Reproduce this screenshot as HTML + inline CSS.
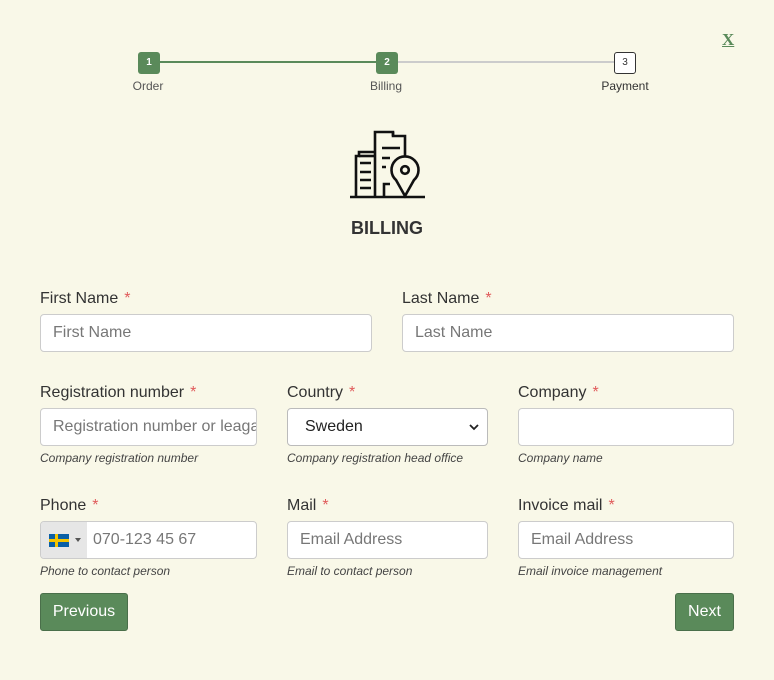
<!DOCTYPE html>
<html><head><meta charset="utf-8"><style>
*{box-sizing:border-box;margin:0;padding:0}
body{width:774px;height:680px;background:#f9f8e8;font-family:"Liberation Sans",sans-serif;position:relative;overflow:hidden;color:#333}
.abs{position:absolute}
.step{position:absolute;width:22px;height:22px;border-radius:3px;font-size:10px;font-weight:bold;text-align:center;line-height:22px}
.g{background:#5a8a5a;color:#fff}
.w{background:#fff;border:1px solid #333;color:#333;line-height:20px;font-weight:normal}
.sl{position:absolute;font-size:12px;color:#555;text-align:center;width:80px}
label{position:absolute;font-size:16px;color:#333}
label i{font-style:normal;color:#e05a5a;margin-left:6px}
.in{position:absolute;height:38px;background:#fff;border:1px solid #ccc;border-radius:4px;font-size:16px;color:#777;padding:0 12px;line-height:36px;white-space:nowrap;overflow:hidden}
.h{position:absolute;font-size:12px;font-style:italic;color:#444}
.btn{position:absolute;background:#5a8a5a;color:#fff;border:1px solid #4a6f4a;border-radius:3px;font-size:16px;text-align:center;line-height:36px;height:38px}
</style></head><body>
<div class="abs" style="left:722px;top:30px;font-family:'Liberation Serif',serif;font-weight:bold;font-size:17px;color:#5a8a5a;text-decoration:underline">X</div>
<div class="abs" style="left:148px;top:61px;width:240px;height:2px;background:#5a8a5a"></div>
<div class="abs" style="left:388px;top:61px;width:236px;height:2px;background:#ccc"></div>
<div class="step g" style="left:138px;top:52px">1</div>
<div class="step g" style="left:376px;top:52px">2</div>
<div class="step w" style="left:614px;top:52px">3</div>
<div class="sl" style="left:108px;top:79px">Order</div>
<div class="sl" style="left:346px;top:79px">Billing</div>
<div class="sl" style="left:585px;top:79px;color:#333">Payment</div>
<svg class="abs" style="left:349px;top:130px" width="77" height="70" viewBox="0 0 77 70" fill="none" stroke="#111" stroke-width="2.6">
<path d="M1 67H76"/>
<path d="M7 67V26H10V22H26"/><path d="M10 26H26"/>
<path d="M26 67V2H44V6H56V27"/><path d="M44 2V6"/>
<path d="M11 33H22M11 42H22M11 50H22M11 58H22"/>
<path d="M33 18H51M33 28H41M33 37H37"/>
<path d="M35 67V54H41"/>
<path d="M56 66L47 50A13.5 13.5 0 1 1 65 50Z" fill="#f9f8e8"/>
<circle cx="56" cy="40" r="3.8"/>
</svg>
<div class="abs" style="left:0;width:774px;top:218px;text-align:center;font-size:18px;font-weight:bold;color:#333">BILLING</div>

<label style="left:40px;top:290px">First Name<i>*</i></label>
<div class="in" style="left:40px;top:314px;width:332px">First Name</div>
<label style="left:402px;top:290px">Last Name<i>*</i></label>
<div class="in" style="left:402px;top:314px;width:332px">Last Name</div>

<label style="left:40px;top:384px">Registration number<i>*</i></label>
<div class="in" style="left:40px;top:408px;width:217px">Registration number or leagal</div>
<div class="h" style="left:40px;top:451px">Company registration number</div>
<label style="left:287px;top:384px">Country<i>*</i></label>
<div class="in" style="left:287px;top:408px;width:201px;color:#222;border-color:#bbb;padding-left:17px">Sweden<svg style="position:absolute;right:8px;top:14px" width="10" height="8"><path d="M1 2L5 6L9 2" stroke="#222" stroke-width="1.8" fill="none"/></svg></div>
<div class="h" style="left:287px;top:451px">Company registration head office</div>
<label style="left:518px;top:384px">Company<i>*</i></label>
<div class="in" style="left:518px;top:408px;width:216px"></div>
<div class="h" style="left:518px;top:451px">Company name</div>

<label style="left:40px;top:497px">Phone<i>*</i></label>
<div class="in" style="left:40px;top:521px;width:217px;padding-left:52px">070-123 45 67</div>
<div class="abs" style="left:41px;top:522px;width:46px;height:36px;background:#e6e6e6;border-radius:3px 0 0 3px"></div>
<svg class="abs" style="left:49px;top:534px" width="20" height="13"><rect width="20" height="13" fill="#0a5fa6"/><rect x="6" width="3" height="13" fill="#f5c400"/><rect y="5" width="20" height="3" fill="#f5c400"/></svg>
<div class="abs" style="left:75px;top:538px;border:3px solid transparent;border-top:4px solid #555"></div>
<div class="h" style="left:40px;top:564px">Phone to contact person</div>
<label style="left:287px;top:497px">Mail<i>*</i></label>
<div class="in" style="left:287px;top:521px;width:201px">Email Address</div>
<div class="h" style="left:287px;top:564px">Email to contact person</div>
<label style="left:518px;top:497px">Invoice mail<i>*</i></label>
<div class="in" style="left:518px;top:521px;width:216px">Email Address</div>
<div class="h" style="left:518px;top:564px">Email invoice management</div>

<div class="btn" style="left:40px;top:593px;width:88px">Previous</div>
<div class="btn" style="left:675px;top:593px;width:59px">Next</div>
</body></html>
